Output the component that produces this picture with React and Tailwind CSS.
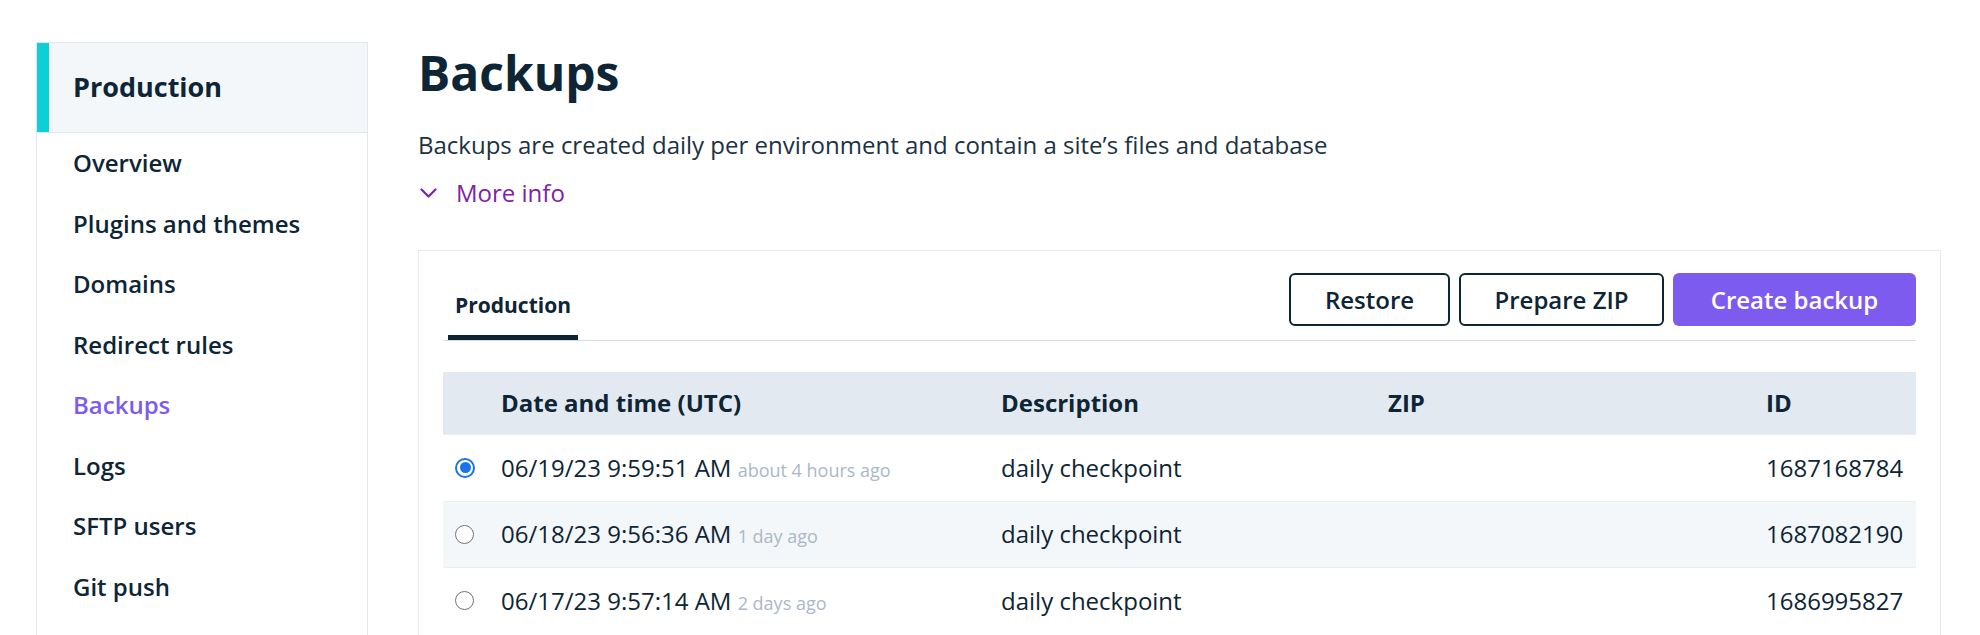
import React, { useState } from "react";

const navItems = [
  "Overview",
  "Plugins and themes",
  "Domains",
  "Redirect rules",
  "Backups",
  "Logs",
  "SFTP users",
  "Git push"
];

const backups = [
  { id: "1687168784", date: "06/19/23 9:59:51 AM", ago: "about 4 hours ago", desc: "daily checkpoint" },
  { id: "1687082190", date: "06/18/23 9:56:36 AM", ago: "1 day ago", desc: "daily checkpoint" },
  { id: "1686995827", date: "06/17/23 9:57:14 AM", ago: "2 days ago", desc: "daily checkpoint" }
];

function Radio({ checked, onClick }) {
  return (
    <button
      type="button"
      onClick={onClick}
      className={
        checked
          ? "flex h-[20px] w-[20px] items-center justify-center rounded-full border-2 border-[#1a73e8] bg-white"
          : "h-[19px] w-[19px] rounded-full border-[1.5px] border-[#6f7479] bg-white"
      }
    >
      {checked && <span className="h-[11px] w-[11px] rounded-full bg-[#1a73e8]" />}
    </button>
  );
}

function Sidebar() {
  return (
    <aside className="ml-[36px] mt-[42px] w-[332px] shrink-0 self-start border border-[#e1e8ef]">
      <div className="flex h-[90px] items-center border-b border-[#e1e8ef] bg-[#f4f7fa]">
        <div className="h-full w-[12px] bg-[#0ecfd6]" />
        <span className="ml-[24px] text-[27px] font-bold text-[#0d2535]">Production</span>
      </div>
      <nav className="flex flex-col pb-[40px]">
        {navItems.map((item) => (
          <a
            key={item}
            href="#"
            className={
              "flex h-[60.5px] items-center pl-[36px] text-[24px] font-semibold " +
              (item === "Backups" ? "text-[#7e5bef]" : "text-[#0d2535]")
            }
          >
            {item}
          </a>
        ))}
      </nav>
    </aside>
  );
}

export default function App() {
  const [selected, setSelected] = useState(backups[0].id);

  return (
    <div className="flex min-h-[635px] bg-white font-['Open_Sans',sans-serif] text-[#0d2535]">
      <Sidebar />

      <main className="ml-[50px] mr-[39px] flex-1 pt-[45px]">
        <h1 className="text-[48px] font-bold leading-[56px] text-[#0d2535]">Backups</h1>
        <p className="mt-[29px] text-[24px] leading-[30px] text-[#1b3242]">
          Backups are created daily per environment and contain a site’s files and database
        </p>
        <button type="button" className="mt-[18px] flex items-center gap-[19px] pl-[2px] text-[24px] leading-[30px] text-[#7d23a8]">
          <svg width="17" height="10" viewBox="0 0 17 10" fill="none">
            <path d="M1.5 1.5 8.5 8.5 15.5 1.5" stroke="currentColor" strokeWidth="2.2" strokeLinecap="round" strokeLinejoin="round" />
          </svg>
          More info
        </button>

        <section className="mt-[42px] border border-[#e6e9ed] px-[24px] pt-[22px] pb-[10px]">
          <div className="flex items-end justify-between border-b border-[#d3dce6]">
            <div className="ml-[5px] flex w-[130px] flex-col items-center">
              <span className="text-[21px] font-bold leading-[28px] text-[#0d2535]">Production</span>
              <span className="mt-[16px] h-[5px] w-full bg-[#0d2535]" />
            </div>
            <div className="mb-[14px] flex gap-[9px]">
              <button type="button" className="h-[53px] w-[161px] rounded-[6px] border-2 border-[#0d2535] text-[24px] font-semibold text-[#0d2535]">
                Restore
              </button>
              <button type="button" className="h-[53px] w-[205px] rounded-[6px] border-2 border-[#0d2535] text-[24px] font-semibold text-[#0d2535]">
                Prepare ZIP
              </button>
              <button type="button" className="h-[53px] w-[243px] rounded-[6px] bg-[#7e5bef] text-[24px] font-semibold text-white">
                Create backup
              </button>
            </div>
          </div>

          <div className="mt-[31px]">
            <div className="grid h-[62px] grid-cols-[58px_500px_387px_378px_1fr] items-center bg-[#e2e9f1] text-[24px] font-bold text-[#0d2535]">
              <span />
              <span>Date and time (UTC)</span>
              <span>Description</span>
              <span>ZIP</span>
              <span>ID</span>
            </div>
            {backups.map((b, i) => (
              <div
                key={b.id}
                className={
                  "grid h-[66.5px] grid-cols-[58px_500px_387px_378px_1fr] items-center border-t border-[#e9eef3] text-[24px] text-[#0d2535] " +
                  (i % 2 === 1 ? "bg-[#f4f7fa]" : "bg-white")
                }
              >
                <span className="flex pl-[12px]">
                  <Radio checked={selected === b.id} onClick={() => setSelected(b.id)} />
                </span>
                <span className="whitespace-nowrap">
                  {b.date} <span className="text-[18px] text-[#aab8c8]">{b.ago}</span>
                </span>
                <span>{b.desc}</span>
                <span />
                <span>{b.id}</span>
              </div>
            ))}
          </div>
        </section>
      </main>
    </div>
  );
}
